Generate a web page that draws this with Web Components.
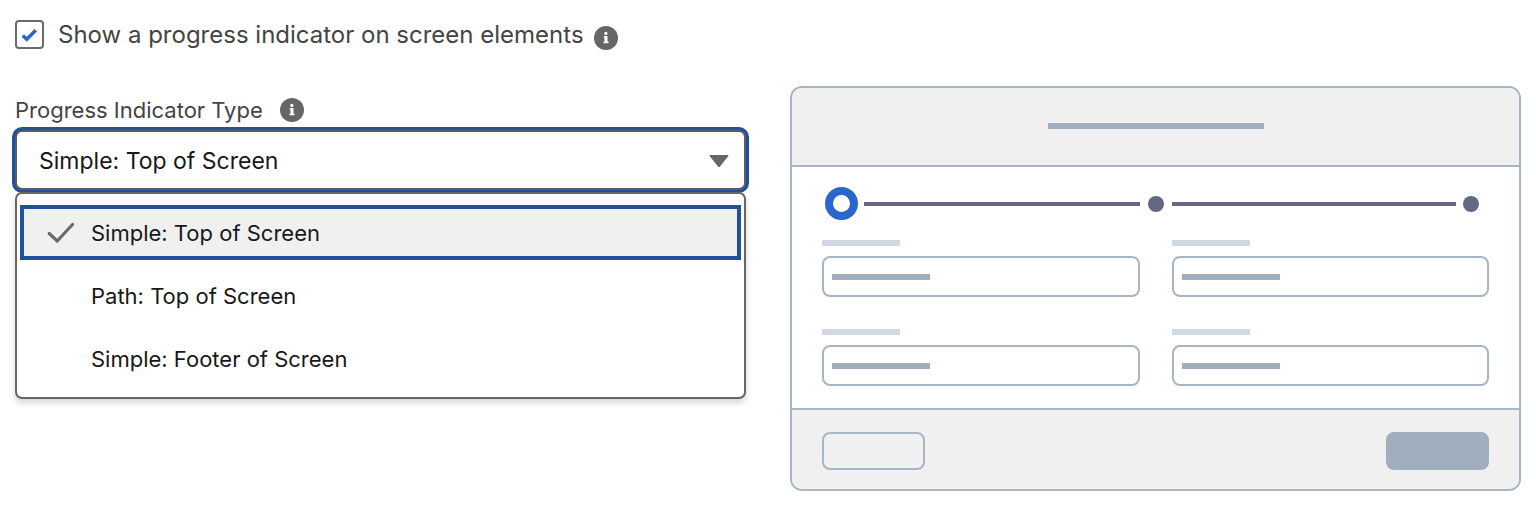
<!DOCTYPE html>
<html lang="en">
<head>
<meta charset="utf-8">
<title>Progress indicator settings</title>
<style>
  body {
    margin: 0;
    background: #fff;
    color: #444;
    font-family: Inter, "Liberation Sans", sans-serif;
    font-size: 24px;
  }
</style>
</head>
<body>
<progress-settings></progress-settings>

<script>
class InfoButton extends HTMLElement {
  connectedCallback() {
    this.attachShadow({ mode: "open" }).innerHTML = `
      <style>
        :host { display: block; flex: none; height: 24px; }
        button { display: block; padding: 0; border: 0; background: none; cursor: pointer; }
        svg { display: block; width: 24px; height: 24px; }
      </style>
      <button type="button" aria-label="${this.getAttribute("label")}">
        <svg viewBox="0 0 24 24" aria-hidden="true">
          <circle cx="12" cy="12" r="12" fill="#666"/>
          <circle cx="11.9" cy="7.4" r="1.6" fill="#fff"/>
          <path fill="#fff" d="M9.8 10.1h3.7v5.7h1.1v1.5H9.4v-1.5h1.1v-4.2h-.7z"/>
        </svg>
      </button>`;
  }
}
customElements.define("info-button", InfoButton);

class CheckField extends HTMLElement {
  connectedCallback() {
    this.attachShadow({ mode: "open" }).innerHTML = `
      <style>
        :host { display: flex; align-items: center; height: 31px; }
        label { display: flex; align-items: center; gap: 14px; line-height: 30px; font-size: 24px; }
        .box { display: grid; width: 29px; height: 29px; }
        input, svg { grid-area: 1 / 1; margin: 0; width: 29px; height: 29px; }
        input {
          appearance: none; box-sizing: border-box;
          border: 2px solid #6b6b6b; border-radius: 4px; background: #fff;
        }
        svg { pointer-events: none; }
        input:not(:checked) + svg { visibility: hidden; }
        ::slotted(info-button) { align-self: flex-end; margin-left: 10px; }
      </style>
      <label>
        <span class="box">
          <input type="checkbox" checked>
          <svg viewBox="0 0 30 30" aria-hidden="true"><path d="M8 16l4.200 4L21.500 10.700" fill="none" stroke="#2b66cc" stroke-width="3.600"/></svg>
        </span>
        <span>${this.getAttribute("text")}</span>
      </label>
      <slot></slot>`;
  }
}
customElements.define("check-field", CheckField);

class TypePicker extends HTMLElement {
  connectedCallback() {
    const items = ["Simple: Top of Screen", "Path: Top of Screen", "Simple: Footer of Screen"];
    const root = this.attachShadow({ mode: "open" });
    root.innerHTML = `
      <style>
        :host { display: block; }
        .head { display: flex; align-items: center; gap: 17px; height: 28px; margin-bottom: 6px; }
        label { font-size: 22px; line-height: 28px; }
        .combo { position: relative; }
        .control { display: grid; align-items: center; }
        select, .arrow { grid-area: 1 / 1; }
        select {
          appearance: none; box-sizing: border-box; width: 100%; height: 60px;
          margin: 0; padding: 2px 22px 0; outline: 0;
          border: 2px solid #5c5c5c; border-radius: 7px; background: #fff;
          box-shadow: 0 0 0 3px #2250a0;
          color: #181818; font: inherit; font-size: 23px;
        }
        .arrow { justify-self: end; width: 20px; height: 14px; margin-right: 17px; pointer-events: none; }
        ul {
          position: absolute; top: 100%; left: 0; right: 0;
          display: flex; flex-direction: column; gap: 8px;
          margin: 2px 0 0; padding: 11px 3px; list-style: none;
          border: 2px solid #666; border-radius: 7px; background: #fff;
          box-shadow: 0 4px 6px rgba(0, 0, 0, .16);
        }
        ul button {
          display: flex; align-items: center; gap: 16px;
          box-sizing: border-box; width: 100%; height: 55px; padding: 0 23px;
          border: 4px solid transparent; background: none;
          color: #181818; font: inherit; font-size: 22px; text-align: left;
        }
        ul button[aria-selected="true"] { border-color: #2250a0; background: #f0f0f0; }
        ul svg { width: 28px; height: 28px; flex: none; visibility: hidden; }
        [aria-selected="true"] svg { visibility: visible; }
      </style>
      <div class="head">
        <label for="type">Progress Indicator Type</label>
        <slot></slot>
      </div>
      <div class="combo">
        <div class="control">
          <select id="type">${items.map(t => `<option>${t}</option>`).join("")}</select>
          <svg class="arrow" viewBox="0 0 20 14" aria-hidden="true"><path d="M1 2h18q1 0 .4 1L11 13.400q-1 1-2 0L.6 3Q0 2 1 2z" fill="#666"/></svg>
        </div>
        <ul role="listbox" aria-label="Progress Indicator Type">
          ${items.map((t, i) => `<li role="none"><button type="button" role="option" aria-selected="${i === 0}">
            <svg viewBox="0 0 28 28" aria-hidden="true"><path d="M2.200 14.500l8 7.500L25.500 5.500" fill="none" stroke="#6b6b6b" stroke-width="3.200" stroke-linecap="round"/></svg>
            <span>${t}</span></button></li>`).join("")}
        </ul>
      </div>`;
    const select = root.querySelector("select");
    const options = [...root.querySelectorAll("[role=option]")];
    const pick = n => {
      select.selectedIndex = n;
      options.forEach((o, i) => o.setAttribute("aria-selected", i === n));
    };
    options.forEach((o, i) => o.addEventListener("click", () => pick(i)));
    select.addEventListener("change", () => pick(select.selectedIndex));
  }
}
customElements.define("type-picker", TypePicker);

class PreviewField extends HTMLElement {
  connectedCallback() {
    this.attachShadow({ mode: "open" }).innerHTML = `
      <style>
        :host { display: block; }
        .label { width: 78px; height: 6px; margin-bottom: 10px; background: #d0d8e4; }
        .box {
          display: flex; align-items: center; box-sizing: border-box; height: 41px;
          padding-left: 8px; border: 2px solid #a7b5c5; border-radius: 8px;
        }
        .value { width: 98px; height: 6px; background: #a0aebd; }
      </style>
      <div class="label"></div>
      <div class="box"><div class="value"></div></div>`;
  }
}
customElements.define("preview-field", PreviewField);

class PreviewSteps extends HTMLElement {
  connectedCallback() {
    this.attachShadow({ mode: "open" }).innerHTML = `
      <style>
        :host { display: grid; grid-template-columns: 1fr 32px 1fr; align-items: center; height: 33px; }
        div { display: flex; align-items: center; }
        .first { gap: 6px; padding-left: 3px; }
        .middle { justify-content: center; }
        .last { gap: 7px; padding-right: 10px; }
        i { flex: none; box-sizing: border-box; width: 16px; height: 16px; border-radius: 50%; background: #646882; }
        i.current { width: 33px; height: 33px; border: 8px solid #2b66cc; background: #fff; }
        b { flex: 1; height: 4px; background: #646882; }
      </style>
      <div class="first"><i class="current"></i><b></b></div>
      <div class="middle"><i></i></div>
      <div class="last"><b></b><i></i></div>`;
  }
}
customElements.define("preview-steps", PreviewSteps);

class ScreenPreview extends HTMLElement {
  connectedCallback() {
    this.attachShadow({ mode: "open" }).innerHTML = `
      <style>
        :host { display: block; box-sizing: border-box; overflow: hidden; border: 2px solid #a7b5c5; border-radius: 12px; }
        header, footer { display: flex; align-items: center; background: #f0f0f0; }
        header { justify-content: center; box-sizing: border-box; height: 79px; padding-bottom: 2px; border-bottom: 2px solid #a7b5c5; }
        header div { width: 216px; height: 6px; background: #a0aebd; }
        main { display: grid; gap: 20px; padding: 20px 30px 22px; }
        .fields { display: grid; grid-template-columns: 1fr 1fr; gap: 32px; }
        footer { justify-content: space-between; box-sizing: border-box; height: 81px; padding: 2px 30px 0; border-top: 2px solid #a7b5c5; }
        footer div { box-sizing: border-box; width: 103px; height: 38px; border: 2px solid #a7b5c5; border-radius: 8px; }
        footer .primary { border-color: #a0aebd; background: #a0aebd; }
      </style>
      <header><div></div></header>
      <main>
        <preview-steps></preview-steps>
        <div class="fields">
          <preview-field></preview-field><preview-field></preview-field>
          <preview-field></preview-field><preview-field></preview-field>
        </div>
      </main>
      <footer><div></div><div class="primary"></div></footer>`;
  }
}
customElements.define("screen-preview", ScreenPreview);

class ProgressSettings extends HTMLElement {
  connectedCallback() {
    this.attachShadow({ mode: "open" }).innerHTML = `
      <style>
        :host { display: block; padding: 19px 15px 17px; }
        .columns { display: grid; grid-template-columns: 1fr 1fr; gap: 44px; margin-top: 36px; }
        type-picker { margin-top: 10px; }
      </style>
      <check-field text="Show a progress indicator on screen elements">
        <info-button label="About the progress indicator"></info-button>
      </check-field>
      <div class="columns">
        <type-picker><info-button label="About indicator types"></info-button></type-picker>
        <screen-preview></screen-preview>
      </div>`;
  }
}
customElements.define("progress-settings", ProgressSettings);
</script>
</body>
</html>
